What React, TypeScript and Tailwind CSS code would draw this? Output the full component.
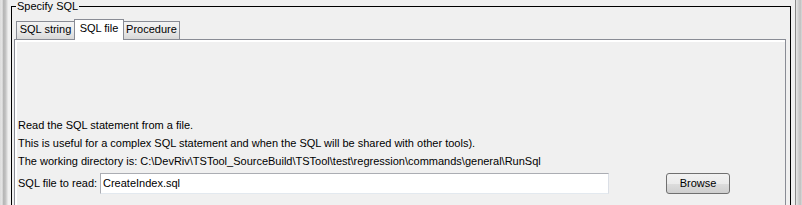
const font = "font-['Liberation_Sans',Arial,sans-serif] text-[11px] leading-[13px] text-black";

function Tab({ label, selected }: { label: string; selected?: boolean }) {
  if (selected) {
    return (
      <div className="relative z-10 -mx-px -mb-px flex h-[21px] w-[50px] items-start justify-center whitespace-nowrap border border-b-0 border-[#898c95] bg-white pt-[2px]">
        {label}
      </div>
    );
  }
  return (
    <div className="flex h-[18px] items-start justify-center whitespace-nowrap border border-b-0 border-[#898c95] bg-gradient-to-b from-[#f3f3f3] via-[#ebebeb] to-[#d8d8d8] pt-[1px]">
      {label}
    </div>
  );
}

export default function App() {
  return (
    <div className={`flex h-[205px] w-[802px] overflow-hidden bg-[#f0f0f0] ${font}`}>
      {/* window edge, left */}
      <div className="h-full w-[8px] bg-[linear-gradient(to_right,#dcdcdc_0%,#e6e6e6_25%,#b4b4b4_45%,#c4c4c4_70%,#ececec_100%)]" />

      <div className="flex-1 pl-[3px] pr-[4px]">
        <fieldset className="h-[220px] border border-b-0 border-black pl-[2px] pr-[4px]">
          <legend className="ml-[2px] px-[1px] leading-[13px]">Specify SQL</legend>

          {/* tab strip */}
          <div className="mt-[6px] flex h-[20px] items-end pl-[2px]">
            <div className="w-[59px]">
              <Tab label="SQL string" />
            </div>
            <Tab label="SQL file" selected />
            <div className="w-[57px]">
              <Tab label="Procedure" />
            </div>
          </div>

          {/* tab content */}
          <div className="h-[180px] border border-b-0 border-[#898c95]">
            <div className="h-full border-l-2 border-t-2 border-white pl-[1px] pt-[74px]">
              <div className="leading-[18px]">Read the SQL statement from a file.</div>
              <div className="leading-[18px]">
                This is useful for a complex SQL statement and when the SQL will be shared with other tools).
              </div>
              <div className="leading-[18px]">
                The working directory is: C:\DevRiv\TSTool_SourceBuild\TSTool\test\regression\commands\general\RunSql
              </div>
              <div className="mt-[3px] flex items-center">
                <span className="w-[82px]">SQL file to read:</span>
                <div className="flex h-[21px] w-[509px] items-center border border-[#abadb3] border-b-[#e3e9ef] border-r-[#dbdfe6] bg-white pl-[2px]">
                  CreateIndex.sql
                </div>
                <button className="ml-[57px] flex h-[21px] w-[64px] items-center justify-center rounded-[3px] border border-[#707070] bg-[linear-gradient(to_bottom,#f2f2f2_0%,#ebebeb_50%,#dddddd_51%,#cfcfcf_100%)]">
                  Browse
                </button>
              </div>
            </div>
          </div>
        </fieldset>
      </div>

      {/* window edge, right */}
      <div className="h-full w-[7px] border-l border-[#8a8a8a] bg-[linear-gradient(to_right,#e8e8e8_0%,#d0d0d0_40%,#c0c0c0_70%,#dadada_100%)]" />
    </div>
  );
}
